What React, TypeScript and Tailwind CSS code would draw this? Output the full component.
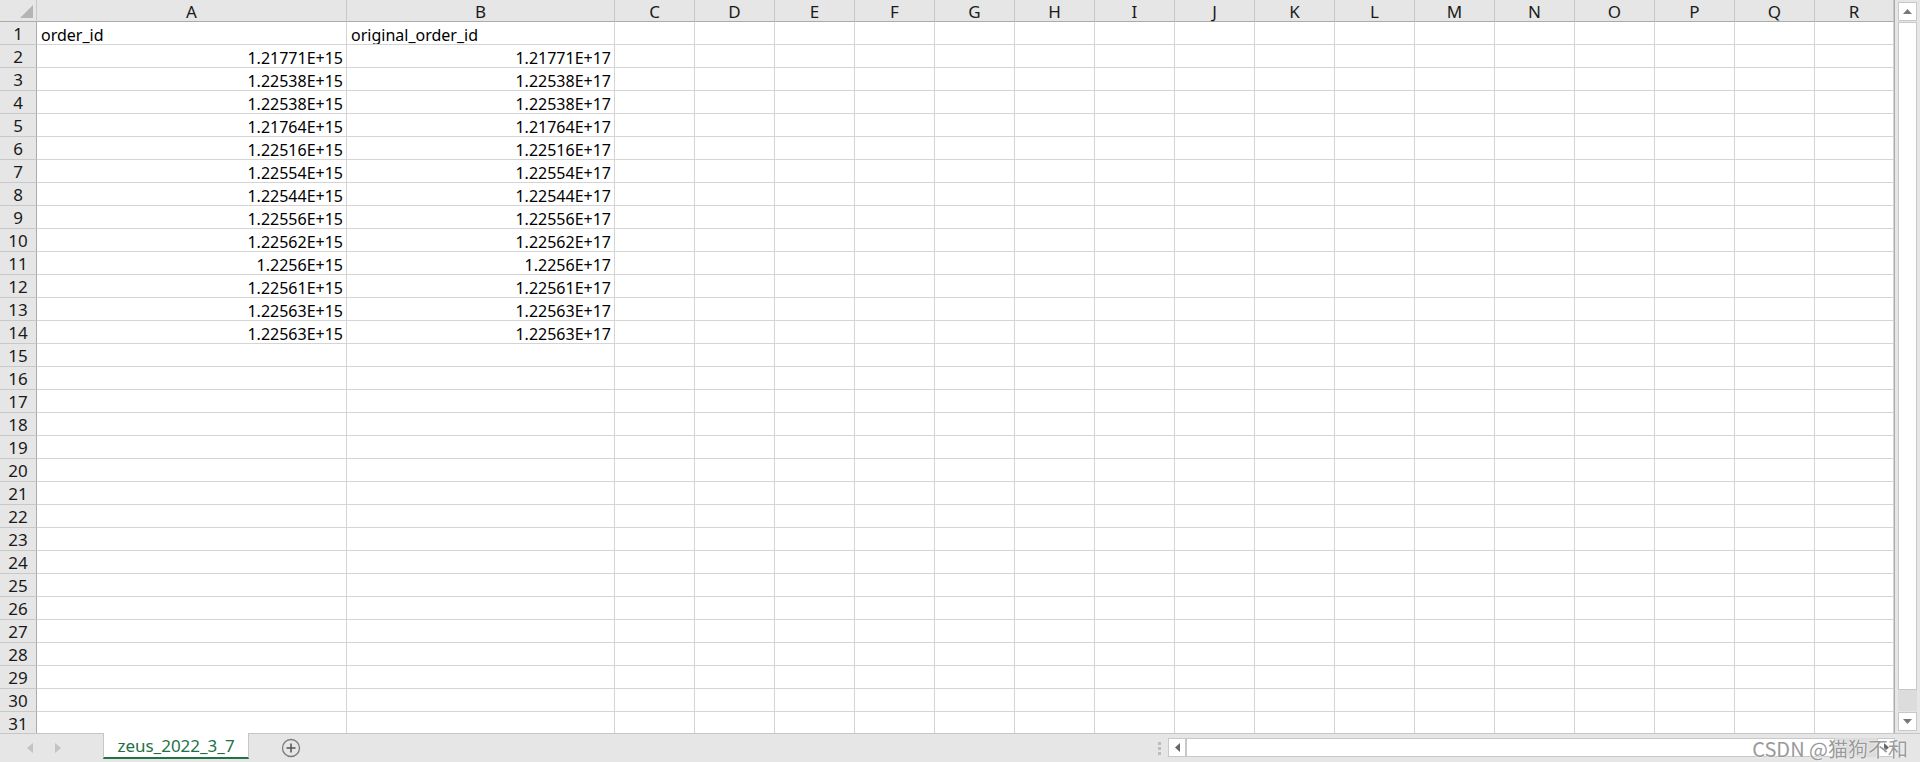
import React from 'react';

const COLUMNS = ['A', 'B', 'C', 'D', 'E', 'F', 'G', 'H', 'I', 'J', 'K', 'L', 'M', 'N', 'O', 'P', 'Q', 'R'];

const ORDER_IDS = [
  '1.21771E+15', '1.22538E+15', '1.22538E+15', '1.21764E+15', '1.22516E+15',
  '1.22554E+15', '1.22544E+15', '1.22556E+15', '1.22562E+15', '1.2256E+15',
  '1.22561E+15', '1.22563E+15', '1.22563E+15',
];

const ORIGINAL_IDS = ORDER_IDS.map((v) => v.replace('E+15', 'E+17'));

const ROW_COUNT = 31;

function cellText(row: number, col: number): { text: string; numeric: boolean } | null {
  if (row === 1 && col === 0) return { text: 'order_id', numeric: false };
  if (row === 1 && col === 1) return { text: 'original_order_id', numeric: false };
  if (row >= 2 && row <= 14 && col === 0) return { text: ORDER_IDS[row - 2], numeric: true };
  if (row >= 2 && row <= 14 && col === 1) return { text: ORIGINAL_IDS[row - 2], numeric: true };
  return null;
}

function SheetGrid() {
  return (
    <div className="grid grid-cols-[37px_310px_268px_repeat(15,80px)_79px] bg-white">
      {/* corner */}
      <div className="h-[22px] bg-[#e6e6e6] border-r border-b border-r-[#c8c8c8] border-b-[#ababab] relative">
        <svg className="absolute left-[20px] top-[5px]" width="14" height="14" viewBox="0 0 14 14">
          <polygon points="13,0 13,13 0,13" fill="#b4b4b4" />
        </svg>
      </div>
      {COLUMNS.map((c) => (
        <div
          key={c}
          className="h-[22px] bg-[#e6e6e6] border-r border-b border-r-[#c8c8c8] border-b-[#ababab] flex items-center justify-center pt-[2px] text-[17px] text-[#1a1a1a]"
        >
          {c}
        </div>
      ))}

      {Array.from({ length: ROW_COUNT }, (_, i) => i + 1).map((row) => (
        <React.Fragment key={row}>
          <div className="h-[23px] bg-[#e6e6e6] border-r border-b border-r-[#ababab] border-b-[#c8c8c8] flex items-center justify-center pt-[2px] text-[17px] text-[#1a1a1a]">
            {row}
          </div>
          {COLUMNS.map((c, ci) => {
            const cell = cellText(row, ci);
            return (
              <div
                key={c}
                className={
                  'h-[23px] border-r border-b border-[#d4d4d4] flex items-center pt-[3px] text-[16px] text-black whitespace-nowrap overflow-hidden ' +
                  (cell && cell.numeric ? 'justify-end pr-[3px]' : 'justify-start pl-[4px]')
                }
              >
                {cell ? cell.text : ''}
              </div>
            );
          })}
        </React.Fragment>
      ))}
    </div>
  );
}

function VerticalScrollbar() {
  return (
    <div className="w-[25px] h-full bg-[#e6e6e6] flex flex-col pl-[3px] pr-[3px] pt-[2px] pb-[2px]">
      <div className="h-[19px] bg-white border border-[#c8c8c8] flex items-center justify-center">
        <svg width="9" height="6" viewBox="0 0 9 6">
          <polygon points="4.5,0 9,5 0,5" fill="#777" />
        </svg>
      </div>
      <div className="flex-1 flex flex-col bg-[#dcdcdc] mt-[1px] mb-[1px]">
        <div className="h-[668px] bg-white border border-[#c8c8c8]" />
      </div>
      <div className="h-[19px] bg-white border border-[#c8c8c8] flex items-center justify-center">
        <svg width="9" height="6" viewBox="0 0 9 6">
          <polygon points="0,0 9,0 4.5,5" fill="#777" />
        </svg>
      </div>
    </div>
  );
}

function BottomBar() {
  return (
    <div className="h-[29px] bg-[#e6e6e6] border-t border-[#c6c6c6] flex items-start">
      {/* sheet navigation arrows */}
      <div className="w-[103px] h-full flex items-center pl-[27px] gap-[22px]">
        <svg width="6" height="10" viewBox="0 0 6 10">
          <polygon points="6,0 6,10 0,5" fill="#c3c3c3" />
        </svg>
        <svg width="6" height="10" viewBox="0 0 6 10">
          <polygon points="0,0 6,5 0,10" fill="#c3c3c3" />
        </svg>
      </div>

      {/* active sheet tab */}
      <div className="w-[146px] h-[26px] -mt-px bg-white border-l border-r border-[#c6c6c6] border-b-2 border-b-[#217346] flex items-center justify-center pt-[2px] text-[17px] text-[#1e7145]">
        zeus_2022_3_7
      </div>

      {/* new sheet */}
      <div className="w-[84px] h-full flex items-center justify-center">
        <svg width="20" height="20" viewBox="0 0 20 20">
          <circle cx="10" cy="10" r="8.5" fill="none" stroke="#7a7a7a" strokeWidth="1.3" />
          <line x1="10" y1="5.5" x2="10" y2="14.5" stroke="#5a5a5a" strokeWidth="1.6" />
          <line x1="5.5" y1="10" x2="14.5" y2="10" stroke="#5a5a5a" strokeWidth="1.6" />
        </svg>
      </div>

      <div className="flex-1" />

      {/* splitter dots */}
      <div className="w-[20px] h-full flex flex-col items-center justify-center gap-[2px] mr-[-1px]">
        <span className="w-[3px] h-[3px] bg-[#bdbdbd]" />
        <span className="w-[3px] h-[3px] bg-[#bdbdbd]" />
        <span className="w-[3px] h-[3px] bg-[#bdbdbd]" />
      </div>

      {/* horizontal scrollbar */}
      <div className="w-[727px] h-[19px] mt-[4px] flex bg-[#dcdcdc]">
        <div className="w-[18px] h-full bg-white border border-[#c8c8c8] flex items-center justify-center">
          <svg width="5" height="9" viewBox="0 0 5 9">
            <polygon points="5,0 5,9 0,4.5" fill="#666" />
          </svg>
        </div>
        <div className="w-[649px] h-full bg-white border border-[#c8c8c8]" />
        <div className="flex-1" />
        <div className="w-[18px] h-full bg-white border border-[#c8c8c8] flex items-center justify-center">
          <svg width="5" height="9" viewBox="0 0 5 9">
            <polygon points="0,0 5,4.5 0,9" fill="#666" />
          </svg>
        </div>
      </div>
      <div className="w-[25px]" />
    </div>
  );
}

export default function App() {
  return (
    <div className="relative w-[1920px] h-[762px] overflow-hidden bg-[#e6e6e6] flex flex-col font-['Noto_Sans','Noto_Sans_CJK_SC',sans-serif]">
      <div className="h-[733px] flex overflow-hidden">
        <div className="w-[1895px] h-full overflow-hidden border-r border-[#ababab] bg-white">
          <SheetGrid />
        </div>
        <VerticalScrollbar />
      </div>
      <BottomBar />

      {/* watermark */}
      <div className="absolute right-[12px] bottom-[3px] text-[20px] leading-none text-[#9a9a9a] font-['Noto_Sans_CJK_SC',sans-serif] [text-shadow:0_0_2px_#fff,0_0_1px_#fff]">
        CSDN @猫狗不和
      </div>
    </div>
  );
}
